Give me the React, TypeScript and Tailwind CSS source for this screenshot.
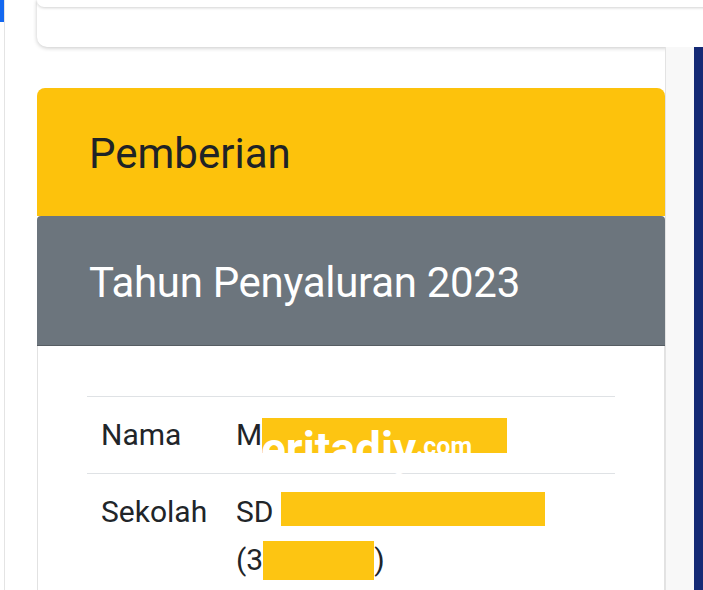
export default function App() {
  return (
    <div className="w-[703px] h-[590px] overflow-hidden bg-white flex font-[family-name:Roboto,'Noto_Sans',sans-serif] text-[#212529]">
      {/* left strip */}
      <div className="w-[5px] shrink-0 border-r border-[#e4e4e4] flex flex-col">
        <div className="h-[22px] bg-[#1468f0]" />
      </div>

      <div className="flex-1 min-w-0 flex flex-col">
        {/* top card remnant */}
        <div className="h-[47px] shrink-0 pl-[32px]">
          <div className="h-full -mr-[24px] bg-white rounded-bl-[10px] shadow-[0_1px_4px_rgba(0,0,0,0.22)]">
            <div className="h-[7px] rounded-bl-[8px] shadow-[0_1px_3px_rgba(0,0,0,0.18)]" />
          </div>
        </div>

        <div className="flex flex-1 min-h-0">
          {/* main panel */}
          <div className="w-[661px] shrink-0 border-r border-[#e3e3e3] pl-[32px] pt-[41px]">
            <div className="w-[628px]">
              <div className="rounded-t-[8px] bg-[#fdc20c] pl-[52px] pt-[34px] pb-[31px] text-[42px] leading-[63px] text-[#1f2326]">
                Pemberian
              </div>
              <div className="bg-white">
                <div className="rounded-t-[4px] bg-[#6c757d] border-b border-[#565d63] pl-[52px] pt-[35px] pb-[31px] text-[42px] leading-[63px] tracking-[-0.3px] text-white">
                  Tahun Penyaluran 2023
                </div>
              </div>
              <div className="bg-white border-x border-[#e2e2e2] pl-[49px] pr-[49px] pt-[50px] pb-[40px] text-[30px] leading-[48px]">
                <div className="border-t border-[#dfe2e5] flex py-[14px]">
                  <div className="w-[149px] shrink-0 pl-[14px]">Nama</div>
                  <div className="relative flex-1">
                    M<span className="inline-block w-[245px] h-[35px] bg-[#fdc512] align-[-8px]" />
                    <span className="absolute z-10 left-[25px] top-[15px] text-[46px] leading-none font-bold text-white whitespace-nowrap">
                      eritadiy
                    </span>
                    <span className="absolute z-10 left-[180px] top-[23px] text-[25px] leading-none font-bold text-white whitespace-nowrap">
                      .com
                    </span>
                  </div>
                </div>
                <div className="border-t border-[#dfe2e5] flex py-[14px]">
                  <div className="w-[149px] shrink-0 pl-[14px]">Sekolah</div>
                  <div className="flex-1">
                    SD <span className="inline-block w-[264px] h-[34px] bg-[#fdc512] align-[-4px]" />
                    <br />
                    (3<span className="inline-block w-[111px] h-[39px] bg-[#fdc512] align-[-10px]" />)
                  </div>
                </div>
              </div>
            </div>
          </div>
          <div className="w-[28px] shrink-0 bg-[#f8f8f8]" />
          <div className="flex-1 bg-[#152a75]" />
        </div>
      </div>
    </div>
  );
}
